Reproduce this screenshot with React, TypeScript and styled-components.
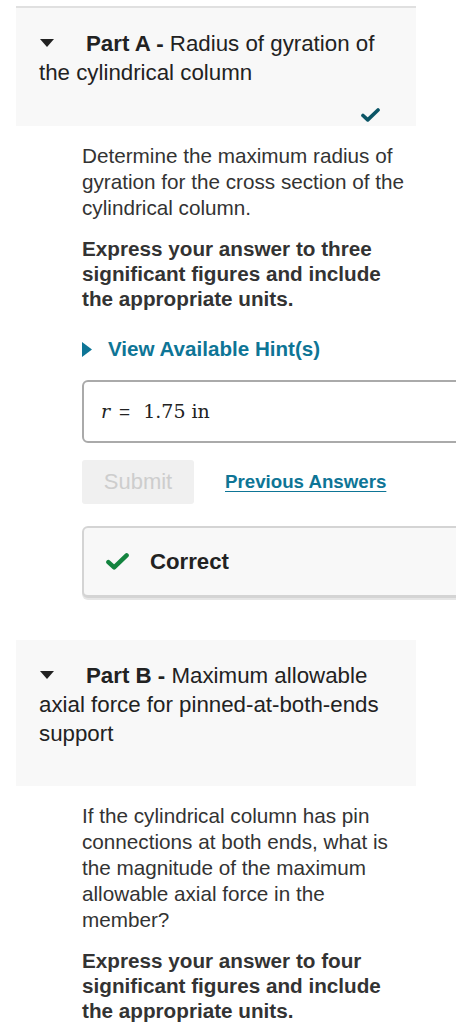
import styled, { createGlobalStyle } from 'styled-components';

const GlobalStyle = createGlobalStyle`
  body {
    margin: 0;
    background: #fff;
    font-family: 'Liberation Sans', Arial, sans-serif;
    color: #333;
  }
`;

const Caret = ({ color, dir }: { color: string; dir: 'down' | 'right' }) =>
  dir === 'down' ? (
    <svg width="14" height="9" viewBox="0 0 14 9">
      <path d="M0 0 L14 0 L7 8 Z" fill={color} />
    </svg>
  ) : (
    <svg width="10" height="15" viewBox="0 0 10 15">
      <path d="M0 0 L10 7.5 L0 15 Z" fill={color} />
    </svg>
  );

const Check = ({ color, w }: { color: string; w: number }) => (
  <svg width={w} height={w * 0.75} viewBox="0 0 24 18">
    <path
      d="M2.5 9.5 L8.5 15 L21.5 2.5"
      fill="none"
      stroke={color}
      strokeWidth="4.6"
      strokeLinecap="round"
      strokeLinejoin="round"
    />
  </svg>
);

const Part = ({
  label,
  title,
  done,
  children,
}: {
  label: string;
  title: string;
  done?: boolean;
  children: React.ReactNode;
}) => (
  <section>
    <Header $done={done}>
      <Title>
        <CaretBox>
          <Caret color="#222" dir="down" />
        </CaretBox>
        <b>{label} -</b> {title}
      </Title>
      {done && (
        <DoneRow>
          <Check color="#0b5566" w={19} />
        </DoneRow>
      )}
    </Header>
    <Body>{children}</Body>
  </section>
);

export default function App() {
  return (
    <Wrapper>
      <GlobalStyle />
      <TopRule />
      <Part label="Part A" title="Radius of gyration of the cylindrical column" done>
        <Text>
          Determine the maximum radius of gyration for the cross section of the
          cylindrical column.
        </Text>
        <Text $bold>
          Express your answer to three significant figures and include the
          appropriate units.
        </Text>
        <Hint>
          <Caret color="#0e7596" dir="right" />
          <span>View Available Hint(s)</span>
        </Hint>
        <AnswerBox>
          <MathLine>
            <i>r</i>
            <Eq>=</Eq>
            <span>1.75 in</span>
          </MathLine>
        </AnswerBox>
        <Actions>
          <SubmitButton disabled>Submit</SubmitButton>
          <LinkText>Previous Answers</LinkText>
        </Actions>
        <Feedback>
          <Check color="#13843f" w={23} />
          <span>Correct</span>
        </Feedback>
      </Part>
      <Part label="Part B" title="Maximum allowable axial force for pinned-at-both-ends support">
        <Text>
          If the cylindrical column has pin connections at both ends, what is the
          magnitude of the maximum allowable axial force in the member?
        </Text>
        <Text $bold>
          Express your answer to four significant figures and include the
          appropriate units.
        </Text>
      </Part>
    </Wrapper>
  );
}

const Wrapper = styled.div`
  width: 456px;
  height: 1036px;
  overflow: hidden;
  padding-top: 6px;
  box-sizing: border-box;
`;

const TopRule = styled.div`
  margin-left: 16px;
  width: 400px;
  height: 2px;
  background: #e0e0e0;
`;

const Header = styled.div<{ $done?: boolean }>`
  margin-left: 16px;
  width: 400px;
  box-sizing: border-box;
  background: #f8f8f8;
  padding: 21px 28px ${({ $done }) => ($done ? '2px' : '38px')} 23px;
`;

const Title = styled.div`
  font-size: 22.3px;
  line-height: 29px;
  color: #222;

  b {
    font-weight: bold;
  }
`;

const CaretBox = styled.span`
  display: inline-block;
  width: 46px;
  padding-left: 1px;
  line-height: 0;
  vertical-align: 3px;
`;

const DoneRow = styled.div`
  display: flex;
  justify-content: flex-end;
  padding-right: 8px;
  margin-top: 21px;
  height: 16px;
`;

const Body = styled.div`
  padding: 17px 0 42px 82px;
  width: 456px;
  box-sizing: border-box;
`;

const Text = styled.p<{ $bold?: boolean }>`
  margin: 0 0 15px;
  width: 334px;
  font-size: 20.7px;
  line-height: ${({ $bold }) => ($bold ? '25px' : '26px')};
  font-weight: ${({ $bold }) => ($bold ? 'bold' : 'normal')};
  color: #333;
`;

const Hint = styled.div`
  display: flex;
  align-items: center;
  gap: 16px;
  margin-top: 25px;
  height: 26px;
  font-size: 20.6px;
  font-weight: bold;
  color: #0e7596;
`;

const AnswerBox = styled.div`
  margin-top: 18px;
  height: 63px;
  width: 400px;
  box-sizing: border-box;
  border: 2px solid #aaa;
  border-radius: 6px;
  display: flex;
  align-items: center;
  padding-left: 17px;
`;

const MathLine = styled.div`
  font-family: 'DejaVu Serif', 'Liberation Serif', serif;
  font-size: 19px;
  color: #222;
  display: flex;
  align-items: baseline;

  i {
    font-style: italic;
  }
`;

const Eq = styled.span`
  margin: 0 13px 0 9px;
  font-family: 'Liberation Sans', sans-serif;
`;

const Actions = styled.div`
  display: flex;
  align-items: center;
  gap: 31px;
  margin-top: 17px;
`;

const SubmitButton = styled.button`
  width: 112px;
  height: 44px;
  border: none;
  border-radius: 3px;
  background: #f0f0f0;
  color: #cdcdcd;
  font-family: 'Liberation Sans', Arial, sans-serif;
  font-size: 22px;
  padding: 0;
`;

const LinkText = styled.a`
  font-size: 18.7px;
  font-weight: bold;
  color: #0e7596;
  text-decoration: underline;
  text-underline-offset: 3px;
`;

const Feedback = styled.div`
  margin-top: 22px;
  width: 400px;
  height: 72px;
  box-sizing: border-box;
  background: #f8f8f8;
  border: 2px solid #d4d4d4;
  border-bottom-width: 3px;
  border-radius: 6px;
  box-shadow: 0 2px 0 #e6e6e6;
  display: flex;
  align-items: center;
  gap: 21px;
  padding-left: 22px;
  font-size: 22.2px;
  font-weight: bold;
  color: #222;
`;
